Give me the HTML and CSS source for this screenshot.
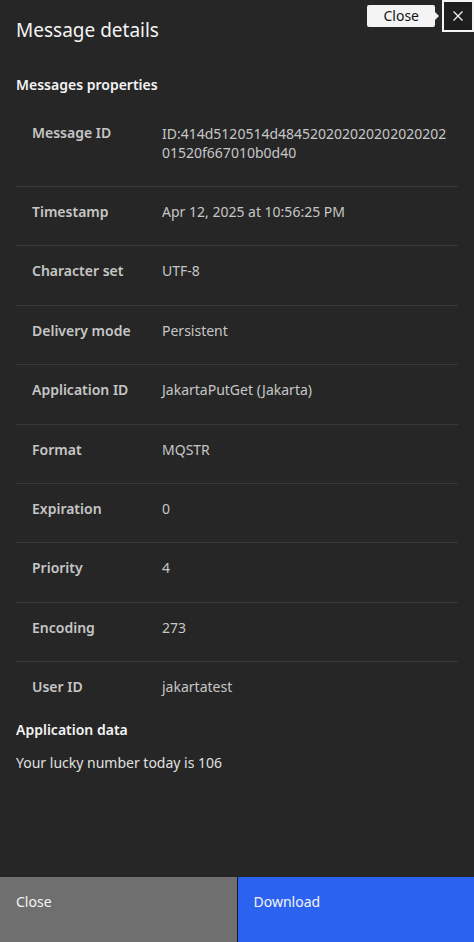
FILE: index.html
```html
<!DOCTYPE html>
<html>
    <head>
        <link rel="stylesheet" href="styles.css">
    </head>
    <body>
        <div class="modal">
            <header class="modal-header">
                <h1 class="modal-title">Message details</h1>
                <div class="close-wrap">
                    <span class="tooltip">Close</span>
                    <button class="close-btn" aria-label="Close">
                        <svg width="16" height="16" viewBox="0 0 16 16">
                            <path d="M3.5 3.5 L12.5 12.5 M12.5 3.5 L3.5 12.5" stroke="#f4f4f4" stroke-width="1.3" fill="none"/>
                        </svg>
                    </button>
                </div>
            </header>

            <div class="modal-body">
                <h2 class="section-title">Messages properties</h2>
                <div class="props">
                    <div class="row">
                        <div class="label">Message ID</div>
                        <div class="value id-value">ID:414d5120514d484520202020202020202<br>01520f667010b0d40</div>
                    </div>
                    <div class="row">
                        <div class="label">Timestamp</div>
                        <div class="value">Apr 12, 2025 at 10:56:25 PM</div>
                    </div>
                    <div class="row">
                        <div class="label">Character set</div>
                        <div class="value">UTF-8</div>
                    </div>
                    <div class="row">
                        <div class="label">Delivery mode</div>
                        <div class="value">Persistent</div>
                    </div>
                    <div class="row">
                        <div class="label">Application ID</div>
                        <div class="value">JakartaPutGet (Jakarta)</div>
                    </div>
                    <div class="row">
                        <div class="label">Format</div>
                        <div class="value">MQSTR</div>
                    </div>
                    <div class="row">
                        <div class="label">Expiration</div>
                        <div class="value">0</div>
                    </div>
                    <div class="row">
                        <div class="label">Priority</div>
                        <div class="value">4</div>
                    </div>
                    <div class="row">
                        <div class="label">Encoding</div>
                        <div class="value">273</div>
                    </div>
                    <div class="row last">
                        <div class="label">User ID</div>
                        <div class="value">jakartatest</div>
                    </div>
                </div>

                <h2 class="section-title data-title">Application data</h2>
                <p class="data-text">Your lucky number today is 106</p>
            </div>

            <footer class="modal-footer">
                <button class="footer-btn secondary">Close</button>
                <button class="footer-btn primary">Download</button>
            </footer>
        </div>
    </body>
</html>
```

FILE: styles.css
```css
* {
    margin: 0;
    padding: 0;
    box-sizing: border-box;
}

html, body {
    height: 100%;
    width: 100%;
}

body {
    background-color: #262626;
    color: #c6c6c6;
    font-family: "Noto Sans", sans-serif;
    font-size: 14px;
    overflow: hidden;
}

.modal {
    height: 100%;
    display: flex;
    flex-direction: column;
}

.modal-header {
    display: flex;
    justify-content: space-between;
    align-items: flex-start;
}

.modal-title {
    font-size: 19px;
    line-height: 28px;
    font-weight: 400;
    color: #f4f4f4;
    padding: 16px 0 0 16px;
}

.close-wrap {
    display: flex;
    align-items: flex-start;
}

.tooltip {
    position: relative;
    margin-top: 5px;
    margin-right: 7px;
    background-color: #f4f4f4;
    color: #161616;
    border-radius: 2px;
    height: 22px;
    line-height: 22px;
    padding: 0 16px;
    font-size: 14px;
}

.tooltip::after {
    content: "";
    position: absolute;
    right: -4px;
    top: 7px;
    border-top: 4px solid transparent;
    border-bottom: 4px solid transparent;
    border-left: 4px solid #f4f4f4;
}

.close-btn {
    width: 32px;
    height: 32px;
    background-color: #1e1e1e;
    border: 2px solid #f4f4f4;
    display: flex;
    align-items: center;
    justify-content: center;
}

.modal-body {
    flex: 1;
}

.section-title {
    font-size: 14px;
    line-height: 18px;
    font-weight: 600;
    color: #f4f4f4;
    padding: 32px 16px 0 16px;
}

.props {
    margin: 14px 16px 0 16px;
}

.row {
    display: grid;
    grid-template-columns: 146px 1fr;
    border-bottom: 1px solid #393939;
    padding: 16px 0 24px 0;
    line-height: 18.4px;
}

.row.last {
    border-bottom: none;
    padding-bottom: 0;
}

.label {
    padding-left: 16px;
    font-weight: 600;
    color: #c6c6c6;
}

.value {
    color: #c6c6c6;
}

.id-value {
    line-height: 19px;
}

.data-title {
    padding-top: 24px;
}

.data-text {
    padding: 15px 16px 0 16px;
    line-height: 18px;
    color: #e0e0e0;
}

.modal-footer {
    display: flex;
    height: 65px;
}

.footer-btn {
    flex: 1;
    border: none;
    font-family: inherit;
    font-size: 14px;
    text-align: left;
    padding: 15px 16px;
    display: flex;
    align-items: flex-start;
    color: #f4f4f4;
}

.secondary {
    background-color: #6f6f6f;
    border-right: 1px solid #161616;
}

.primary {
    background-color: #2b62f0;
}
```
